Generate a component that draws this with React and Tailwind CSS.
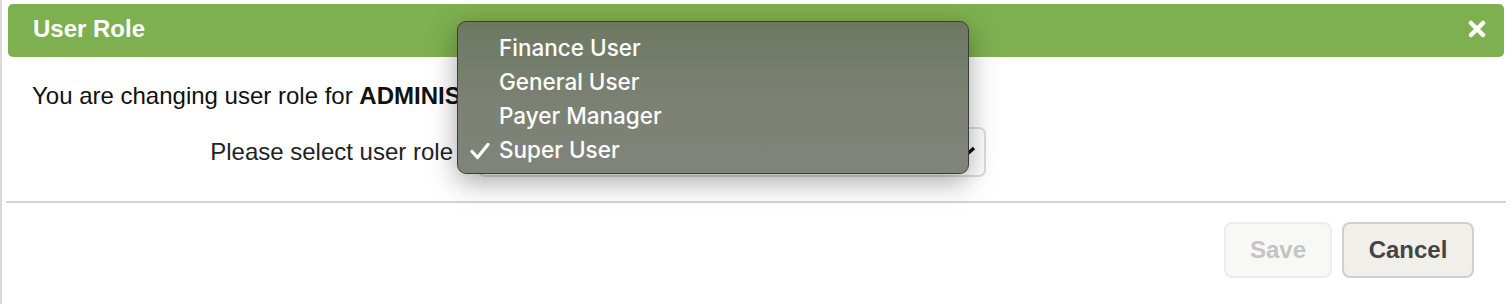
import React from "react";

const roles = ["Finance User", "General User", "Payer Manager", "Super User"];

export default function App() {
  const selected = "Super User";

  return (
    <div
      className="relative w-[1512px] h-[304px] bg-white border-l-2 border-[#d9d9d9] overflow-hidden"
      style={{ fontFamily: '"Liberation Sans", Arial, sans-serif' }}
    >
      {/* Title bar */}
      <div className="mt-[4px] ml-[6px] w-[1496px] h-[53px] rounded-[5px] bg-[#7eb04f] flex items-center justify-between pl-[25px] pr-[18px] pb-[3px]">
        <h2 className="text-[24px] font-bold text-white leading-none">User Role</h2>
        <button className="text-white">
          <svg width="18" height="18" viewBox="0 0 18 18">
            <path d="M3 3 L15 15 M15 3 L3 15" stroke="white" strokeWidth="4.5" strokeLinecap="round" />
          </svg>
        </button>
      </div>

      {/* Body */}
      <p className="mt-[25px] ml-[30px] text-[24px] leading-[28px] text-[#111]">
        You are changing user role for <b>ADMINIS</b>
      </p>

      <div className="mt-[17px] flex items-center">
        <label className="w-[451px] text-right text-[24px] leading-[28px] text-[#222]">
          Please select user role
        </label>
        <div className="ml-[25px] w-[508px] h-[50px] rounded-[7px] border-2 border-[#dcdcdc] bg-white flex items-center justify-end pr-[8px]">
          <svg width="22" height="14" viewBox="0 0 22 14">
            <path d="M2 3 L11 11 L20 3" stroke="#111" strokeWidth="3.5" fill="none" />
          </svg>
        </div>
      </div>

      {/* Divider */}
      <div className="mt-[24px] ml-[4px] w-[1500px] h-[2px] bg-[#d4d4d4]" />

      {/* Footer */}
      <div className="mt-[19px] flex justify-end gap-[10px] pr-[38px]">
        <button
          disabled
          className="w-[108px] h-[56px] rounded-[8px] border-2 border-[#ececec] bg-[#f8f8f6] text-[24px] font-bold text-[#c4c4c4]"
        >
          Save
        </button>
        <button className="w-[132px] h-[56px] rounded-[8px] border-2 border-[#cfcfcf] bg-[#f0efea] text-[24px] font-bold text-[#444]">
          Cancel
        </button>
      </div>

      {/* Native select popup */}
      <div
        className="absolute left-[455px] top-[21px] w-[512px] h-[153px] rounded-[9px] border border-[#3b3d38] bg-gradient-to-b from-[#6d7862] via-[#7b8172] to-[#80847c] shadow-[0_8px_28px_rgba(0,0,0,0.35)] pt-[9px]"
        style={{ fontFamily: 'Inter, "Noto Sans", sans-serif' }}
      >
        {roles.map((r) => (
          <div key={r} className="relative h-[34px] flex items-center pl-[41px] text-[22.5px] font-medium text-white">
            {r === selected && (
              <svg className="absolute left-[12px] top-[9px]" width="20" height="18" viewBox="0 0 20 18">
                <path d="M2 9.5 L7.5 15.5 L18 2.5" stroke="white" strokeWidth="3.2" fill="none" strokeLinecap="round" strokeLinejoin="round" />
              </svg>
            )}
            {r}
          </div>
        ))}
      </div>
    </div>
  );
}
